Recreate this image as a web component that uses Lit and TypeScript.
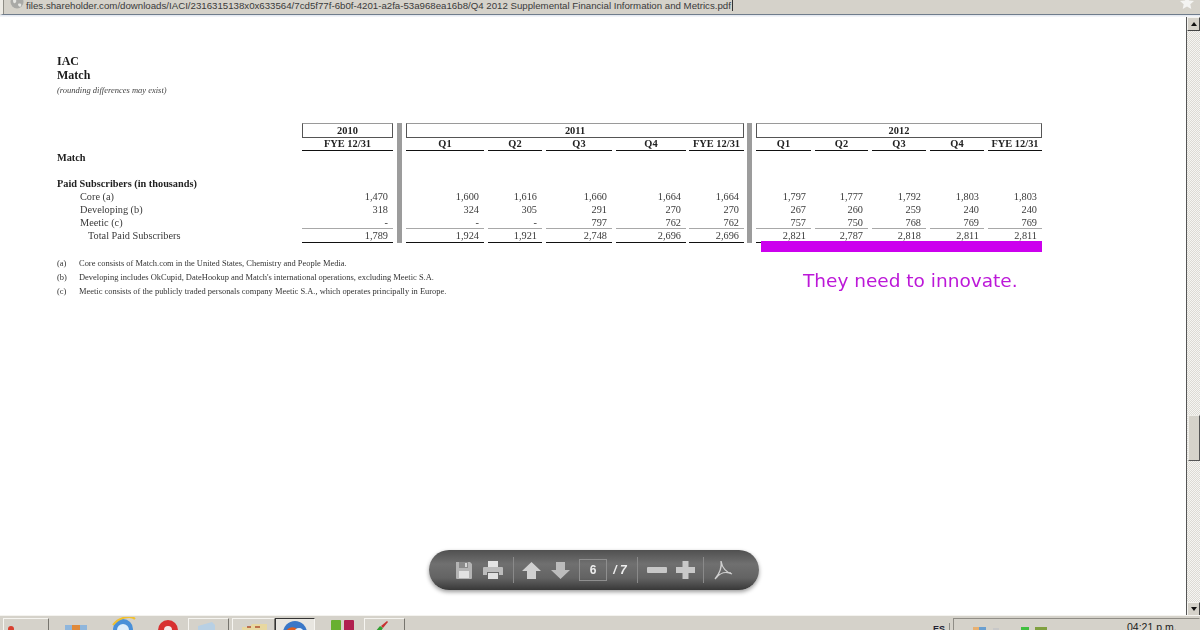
import { LitElement, html, css, svg } from "lit";
import { customElement } from "lit/decorators.js";

const quarters = ["Q1", "Q2", "Q3", "Q4", "FYE 12/31"];
const heads = ["FYE 12/31", ...quarters, ...quarters];
// grid column of each data column
const dataCols = [2, 4, 6, 8, 10, 12, 14, 16, 18, 20, 22];
const rows: [string, string, string[]][] = [
  ["Core (a)", "sub", ["1,470", "1,600", "1,616", "1,660", "1,664", "1,664", "1,797", "1,777", "1,792", "1,803", "1,803"]],
  ["Developing (b)", "sub", ["318", "324", "305", "291", "270", "270", "267", "260", "259", "240", "240"]],
  ["Meetic (c)", "sub", ["-", "-", "-", "797", "762", "762", "757", "750", "768", "769", "769"]],
  ["Total Paid Subscribers", "total", ["1,789", "1,924", "1,921", "2,748", "2,696", "2,696", "2,821", "2,787", "2,818", "2,811", "2,811"]],
];
const notes = [
  ["(a)", "Core consists of Match.com in the United States, Chemistry and People Media."],
  ["(b)", "Developing includes OkCupid, DateHookup and Match's international operations, excluding Meetic S.A."],
  ["(c)", "Meetic consists of the publicly traded personals company Meetic S.A., which operates principally in Europe."],
];

@customElement("app-root")
export class AppRoot extends LitElement {
  static styles = css`
    :host { display: flex; flex-direction: column; width: 1200px; height: 630px; overflow: hidden; background: #fff; }
    .addr { height: 15px; flex: none; background: #d5d2ca; border-left: 3px solid #eeece6; box-sizing: border-box; display: flex; align-items: flex-start; overflow: hidden; position: relative; border-bottom: 1px solid #6f7c8c; box-shadow: inset 1px 0 0 #8f8d86; }
    .addr .globe { width: 14px; height: 14px; margin: -5px 0 0 7px; flex: none; }
    .addr .url { font: 9.68px/11px "Liberation Sans", sans-serif; color: #3a3a3a; margin: 0 0 0 2px; white-space: nowrap; border-right: 1px solid #333; padding-right: 1px; height: 11px; }
    .addr .star { position: absolute; right: 6px; top: -4px; width: 14px; height: 14px; }
    .strip { height: 2px; flex: none; background: linear-gradient(#dfe5ee, #f6f7fa); }
    .main { flex: 1; display: flex; min-height: 0; }
    .doc { flex: 1; position: relative; font-family: "Liberation Serif", serif; color: #2c2c2c; padding: 0 0 0 57px; min-width: 0; will-change: transform; }
    .title { font-weight: bold; font-size: 12px; line-height: 14px; color: #1c1c1c; margin-top: 37px; }
    .round { font-style: italic; font-size: 8.5px; line-height: 10px; color: #444; margin-top: 3px; height: 10px; }
    .grid { display: grid; margin-top: 28px; font-size: 10.3px;
      grid-template-columns: 245px 91px 13px 78px 4px 54px 4px 66px 4px 70px 3px 55px 12px 55px 4px 53px 4px 54px 4px 54px 4px 54px;
      grid-template-rows: 15px 13px 13px 13px 13px 13px 13px 13px 14px; }
    .year { border: 1px solid #555; border-top-color: #9a9a9a; box-sizing: border-box; text-align: center; font-weight: bold; font-size: 10.4px; line-height: 13px; color: #222; grid-row: 1; }
    .hd { grid-row: 2; border-bottom: 1px solid #111; text-align: center; font-weight: bold; font-size: 10.4px; line-height: 12px; color: #222; white-space: nowrap; }
    .vbar { grid-row: 1 / 10; width: 5px; background: #9c9c9c; }
    .vbar.a { margin-left: 4px; }
    .vbar.b { margin-left: 3px; }
    .sec { font-weight: bold; font-size: 10.3px; line-height: 13px; color: #222; white-space: nowrap; grid-column: 1; }
    .lab { grid-column: 1; white-space: nowrap; line-height: 13px; color: #3a3a3a; }
    .lab.sub { padding-left: 23px; }
    .lab.total { padding-left: 31px; }
    .num { text-align: right; padding-right: 5px; line-height: 13px; color: #3a3a3a; }
    .num.m { border-bottom: 1px solid #a8a8a8; box-sizing: border-box; }
    .num.t { border-bottom: 1px solid #111; box-sizing: border-box; }
    .notes { margin-top: 13px; font-size: 8.45px; color: #333; display: grid; grid-template-columns: 22px auto; grid-auto-rows: 14px; line-height: 14px; justify-content: start; }
    .hl { position: absolute; left: 761px; top: 224px; width: 281px; height: 11px; background: #cc00ee; }
    .say { position: absolute; left: 803px; top: 253px; font: 18.5px/22px "DejaVu Sans", sans-serif; color: #bc18d8; white-space: nowrap; }
    .tools { position: absolute; left: 429px; top: 533px; width: 330px; height: 40px; box-sizing: border-box; border-radius: 20px; display: flex; align-items: center; padding-left: 26px; background: linear-gradient(#505050 0%, #707070 35%, #636363 70%, #383838 100%); box-shadow: 0 2px 4px rgba(0,0,0,.4); color: #e8e8e8; }
    .tools svg { flex: none; display: block; }
    .sp8 { width: 8px; flex: none; } .sp9 { width: 9px; flex: none; } .sp10 { width: 10px; flex: none; } .sp5 { width: 5px; flex: none; }
    .div { width: 1px; height: 26px; background: #8a8a8a; flex: none; }
    .page { width: 28px; height: 22px; box-sizing: border-box; border: 1px solid #8f8f8f; text-align: center; font: bold 12px/20px "Liberation Sans", sans-serif; color: #eee; flex: none; }
    .of { width: 16px; font: italic bold 12px/20px "Liberation Sans", sans-serif; color: #eee; white-space: nowrap; flex: none; text-align: center; }
    .sb { width: 14px; flex: none; box-sizing: border-box; border-left: 1px solid #555; background-color: #f0efec; background-image: conic-gradient(#dcdad4 25%, #f6f5f2 0 50%, #dcdad4 0 75%, #f6f5f2 0); background-size: 2px 2px; display: flex; flex-direction: column; }
    .btn { height: 14px; flex: none; background: #d5d2ca; box-sizing: border-box; border: 1px solid; border-color: #f4f3ef #444 #444 #f4f3ef; display: flex; align-items: center; justify-content: center; }
    .arr { width: 0; height: 0; border-left: 3px solid transparent; border-right: 3px solid transparent; }
    .arr.up { border-bottom: 4px solid #111; }
    .arr.dn { border-top: 4px solid #111; }
    .thumb { height: 46px; margin: 384px 0 141px 1px; box-sizing: border-box; flex: none; background: #d5d2ca; border: 1px solid; border-color: #eeede8 #555 #555 #eeede8; }
    .task { height: 15px; flex: none; box-sizing: border-box; background: #d5d2ca; border-top: 1px solid #f4f3ef; display: flex; align-items: flex-start; overflow: hidden; position: relative; }
    .tb { height: 14px; margin-top: 2px; box-sizing: border-box; flex: none; border: 1px solid; border-color: #f6f5f1 #77756e transparent #f6f5f1; display: flex; align-items: flex-start; justify-content: center; }
    .tb.on { border-color: #333 #f6f5f1 transparent #333; background: #e8e6e0; }
    .start { width: 46px; margin-left: 3px; justify-content: flex-start; padding-left: 2px; }
    .w41 { width: 41px; } .w43 { width: 43px; } .w40 { width: 40px; }
    .s3 { width: 3px; flex: none; } .s5 { width: 5px; flex: none; } .s7 { width: 7px; flex: none; } .s16 { width: 16px; flex: none; } .s20 { width: 20px; flex: none; }
    .d1 { margin-top: 1px; } .d2 { margin-top: 2px; } .d3 { margin-top: 3px; } .d4 { margin-top: 4px; } .d6 { margin-top: 6px; }
    .ic { flex: none; display: block; }
    .tray { position: absolute; left: 953px; right: 0; top: 2px; height: 14px; box-sizing: border-box; border: 1px solid; border-color: #8f8d86 transparent transparent #8f8d86; }
    .trayicons { position: absolute; left: 973px; top: 11px; }
    .sep { position: absolute; left: 949px; top: 7px; width: 1px; height: 8px; background: #8f8d86; }
    .lang { position: absolute; left: 933px; top: 8px; font: bold 9px/10px "Liberation Sans", sans-serif; color: #223; }
    .clock { position: absolute; left: 1127px; top: 5px; font: 10.5px/12px "Liberation Sans", sans-serif; color: #222; white-space: nowrap; }
  `;

  private iconSave() {
    return html`<svg width="18" height="20" viewBox="0 0 18 20"><path d="M1 2h14l2 2v14a1 1 0 0 1-1 1H2a1 1 0 0 1-1-1z" fill="#b4b4b4"/><path d="M4 2h9v6H4z" fill="#8a8a8a"/><path d="M10 3h2v4h-2z" fill="#d8d8d8"/><path d="M4 11h10v7H4z" fill="#e2e2e2"/></svg>`;
  }
  private iconPrint() {
    return html`<svg width="20" height="20" viewBox="0 0 20 20"><path d="M5 1h10v6H5z" fill="#e4e4e4"/><path d="M1 7h18a1 1 0 0 1 1 1v7h-4v-3H4v3H0V8a1 1 0 0 1 1-1z" fill="#bcbcbc"/><path d="M5 13h10v6H5z" fill="#e0e0e0"/></svg>`;
  }
  private iconUp() {
    return html`<svg width="19" height="19" viewBox="0 0 19 19"><path d="M9.500 1 19 10h-5v8H5v-8H0z" fill="#d0d0d0"/></svg>`;
  }
  private iconDown() {
    return html`<svg width="19" height="19" viewBox="0 0 19 19"><path d="M9.500 18 19 9h-5V1H5v8H0z" fill="#bcbcbc"/></svg>`;
  }
  private iconMinus() {
    return html`<svg width="20" height="20" viewBox="0 0 20 20"><rect x="0" y="7" width="20" height="6" rx="1" fill="#c8c8c8"/></svg>`;
  }
  private iconPlus() {
    return html`<svg width="19" height="20" viewBox="0 0 19 20"><path d="M6.500 1h6v6H19v6h-6.500v6h-6v-6H0V7h6.500z" fill="#c8c8c8"/></svg>`;
  }
  private iconPdf() {
    return html`<svg width="20" height="20" viewBox="0 0 20 20" fill="none" stroke="#d0d0d0" stroke-width="1.300" stroke-linejoin="round"><path d="M8 1C9 7 7 13 2 19M3 18C7 13 13 11 19 14M18 13C14 13 9 8 8 1"/></svg>`;
  }

  private taskIcon(kind: string) {
    const parts: Record<string, unknown> = {
      media: svg`<rect x="0" y="3" width="22" height="12" fill="#8fb6dc"/><rect x="7" y="3" width="8" height="12" fill="#e08a3a"/>`,
      ie: svg`<circle cx="12" cy="12" r="10" fill="#4a90d8"/><circle cx="12" cy="13" r="6" fill="#dfeefa"/><path d="M2 8C8 0 20-2 24 2" stroke="#f0c030" stroke-width="2" fill="none"/>`,
      red: svg`<circle cx="11" cy="11" r="10" fill="#d83030"/><circle cx="11" cy="11" r="4" fill="#f4e8e8"/>`,
      doc: svg`<path d="M2 5 16 1l3 3v12H2z" fill="#b8d0e4"/>`,
      folder: svg`<path d="M1 5h8l2-3h16v14H1z" fill="#e8d8a0"/><path d="M6 5h4M14 5h5" stroke="#b05030" stroke-width="1.500"/>`,
      fox: svg`<circle cx="13" cy="13" r="12" fill="#3a78c8"/><path d="M3 14C5 6 12 6 15 9l-4 6z" fill="#e06020"/><circle cx="17" cy="13" r="5" fill="#e8f0fa"/>`,
      books: svg`<rect x="0" y="0" width="10" height="16" rx="1" fill="#68b030"/><rect x="13" y="0" width="10" height="16" rx="1" fill="#b02050"/>`,
      pen: svg`<path d="M3 12 8 6l3 2-4 6z" fill="#30a030"/><path d="M9 6 15 1l1 1-5 6z" fill="#c83030"/>`,
    };
    return html`<svg class="ic" width="26" height="16" viewBox="0 0 26 16">${parts[kind]}</svg>`;
  }

  private table() {
    return html`<div class="grid">
      <div class="year" style="grid-column:2">2010</div>
      <div class="year" style="grid-column:4 / 13">2011</div>
      <div class="year" style="grid-column:14 / 23">2012</div>
      <div class="vbar a" style="grid-column:3"></div>
      <div class="vbar b" style="grid-column:13"></div>
      ${heads.map((h, i) => html`<div class="hd" style="grid-column:${dataCols[i]}">${h}</div>`)}
      <div class="sec" style="grid-row:3">Match</div>
      <div class="sec" style="grid-row:5">Paid Subscribers (in thousands)</div>
      ${rows.map(([label, cls, vals], r) => html`
        <div class="lab ${cls}" style="grid-row:${r + 6}">${label}</div>
        ${vals.map((v, i) => html`<div class="num ${r === 2 ? "m" : r === 3 ? "t" : ""}" style="grid-column:${dataCols[i]};grid-row:${r + 6}">${v}</div>`)}
      `)}
    </div>`;
  }

  render() {
    return html`
      <div class="addr">
        <svg class="globe" viewBox="0 0 14 14"><circle cx="7" cy="7" r="6.500" fill="#a9a9a6"/><path d="M3 5c2-2 4 0 3 2S3 9 3 5zM8 9c2-1 4 0 3 2s-3 0-3-2z" fill="#e6e6e2"/></svg>
        <div class="url">files.shareholder.com/downloads/IACI/2316315138x0x633564/7cd5f77f-6b0f-4201-a2fa-53a968ea16b8/Q4 2012 Supplemental Financial Information and Metrics.pdf</div>
        <svg class="star" viewBox="0 0 14 14"><path d="M7 0l2 4.500 5 .5-3.700 3.300L11.300 13 7 10.500 2.700 13l1-4.700L0 5l5-.5z" fill="#f4f4f2"/></svg>
      </div>
      <div class="strip"></div>
      <div class="main">
        <div class="doc">
          <div class="title">IAC<br />Match</div>
          <div class="round">(rounding differences may exist)</div>
          ${this.table()}
          <div class="notes">
            ${notes.map(([k, t]) => html`<div>${k}</div><div>${t}</div>`)}
          </div>
          <div class="hl"></div>
          <div class="say">They need to innovate.</div>
          <div class="tools">
            ${this.iconSave()}
            <span class="sp10"></span>${this.iconPrint()}
            <span class="sp10"></span><div class="div"></div>
            <span class="sp8"></span>${this.iconUp()}
            <span class="sp10"></span>${this.iconDown()}
            <span class="sp9"></span><div class="page">6</div>
            <span class="sp5"></span><div class="of">/ 7</div>
            <span class="sp9"></span><div class="div"></div>
            <span class="sp9"></span>${this.iconMinus()}
            <span class="sp9"></span>${this.iconPlus()}
            <span class="sp8"></span><div class="div"></div>
            <span class="sp9"></span>${this.iconPdf()}
          </div>
        </div>
        <div class="sb">
          <div class="btn"><span class="arr up"></span></div>
          <div class="thumb"></div>
          <div class="btn"><span class="arr dn"></span></div>
        </div>
      </div>
      <div class="task">
        <div class="tb start"><svg class="ic" width="10" height="14" viewBox="0 0 10 14"><circle cx="5" cy="10" r="3" fill="#d84030"/></svg></div>
        <span class="s16"></span>
        <div class="d6">${this.taskIcon("media")}</div>
        <span class="s20"></span>
        <div class="d1">${this.taskIcon("ie")}</div>
        <span class="s20"></span>
        <div class="d3">${this.taskIcon("red")}</div>
        <span class="s5"></span>
        <div class="tb w41"><div class="d2">${this.taskIcon("doc")}</div></div>
        <span class="s3"></span>
        <div class="tb w43"><div class="d3">${this.taskIcon("folder")}</div></div>
        <div class="tb on w40"><div class="d1">${this.taskIcon("fox")}</div></div>
        <span class="s16"></span>
        <div class="d4">${this.taskIcon("books")}</div>
        <span class="s7"></span>
        <div class="tb w41"><div class="d1">${this.taskIcon("pen")}</div></div>
        <div class="lang">ES</div>
        <div class="sep"></div>
        <div class="tray"></div>
        <svg class="ic trayicons" width="90" height="5" viewBox="0 0 90 5"><rect x="0" y="0" width="6" height="5" fill="#e8b070"/><rect x="6" y="0" width="7" height="5" fill="#6a9fd0"/><rect x="20" y="1" width="6" height="4" fill="#c8c8c8"/><rect x="48" y="0" width="8" height="5" fill="#40c040"/><rect x="62" y="0" width="12" height="5" fill="#80a040"/></svg>
        <div class="clock">04:21 p.m.</div>
      </div>
    `;
  }
}
